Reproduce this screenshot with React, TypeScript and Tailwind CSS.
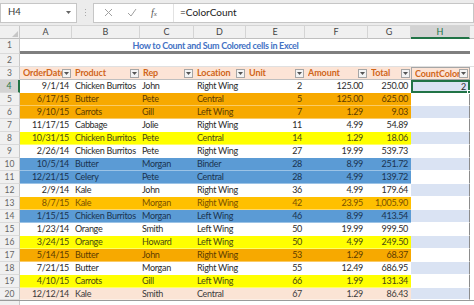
import React from "react";

type Fill = "w" | "o" | "o2" | "y" | "b" | "p";

const fillCls: Record<Fill, string> = {
  w: "bg-white text-[#2b2b2b]",
  o: "bg-[#f7a900] text-[#5e3c00]",
  o2: "bg-[#ffc000] text-[#7a5000]",
  y: "bg-[#ffff00] text-[#4a4a12]",
  b: "bg-[#5b9bd5] text-[#1a3350]",
  p: "bg-[#fbe4d5] text-[#3b3b3b]",
};

type Row = [number, string, string, string, string, string, string, string, Fill];

const rows: Row[] = [
  [4, "9/1/14", "Chicken Burritos", "John", "Right Wing", "2", "125.00", "250.00", "w"],
  [5, "6/17/15", "Butter", "Pete", "Central", "5", "125.00", "625.00", "o"],
  [6, "9/10/15", "Carrots", "Gill", "Left Wing", "7", "1.29", "9.03", "o"],
  [7, "11/17/15", "Cabbage", "Jolie", "Right Wing", "11", "4.99", "54.89", "w"],
  [8, "10/31/15", "Chicken Burritos", "Pete", "Central", "14", "1.29", "18.06", "y"],
  [9, "2/26/14", "Chicken Burritos", "Pete", "Right Wing", "27", "19.99", "539.73", "w"],
  [10, "10/5/14", "Butter", "Morgan", "Binder", "28", "8.99", "251.72", "b"],
  [11, "12/21/15", "Celery", "Pete", "Central", "28", "4.99", "139.72", "b"],
  [12, "2/9/14", "Kale", "John", "Right Wing", "36", "4.99", "179.64", "w"],
  [13, "8/7/15", "Kale", "Morgan", "Right Wing", "42", "23.95", "1,005.90", "o2"],
  [14, "1/15/15", "Chicken Burritos", "Morgan", "Left Wing", "46", "8.99", "413.54", "b"],
  [15, "1/23/14", "Orange", "Smith", "Left Wing", "50", "19.99", "999.50", "w"],
  [16, "3/24/15", "Orange", "Howard", "Left Wing", "50", "4.99", "249.50", "y"],
  [17, "5/14/15", "Butter", "John", "Right Wing", "53", "1.29", "68.37", "o"],
  [18, "7/21/15", "Butter", "Morgan", "Right Wing", "55", "12.49", "686.95", "w"],
  [19, "4/10/15", "Carrots", "Gill", "Left Wing", "66", "1.99", "131.34", "y"],
  [20, "12/12/14", "Kale", "Smith", "Central", "67", "1.29", "86.43", "p"],
];

function RowHead({ n, sel }: { n?: number | string; sel?: boolean }) {
  return (
    <div
      className={`w-[20px] shrink-0 text-center text-[8.5px] tracking-normal leading-[12px] border-b border-[#dadada] ${
        sel
          ? "bg-[#d3d3d3] text-[#217346] border-r-2 border-r-[#217346]"
          : "bg-[#f0f0f0] text-[#666] border-r border-r-[#c8c8c8]"
      }`}
    >
      {n}
    </div>
  );
}

function FilterBtn() {
  return (
    <div className="w-[9px] h-[9px] shrink-0 mr-[1px] bg-[#f4f4f4] border border-[#a6a6a6] flex items-center justify-center">
      <svg width="5" height="3" viewBox="0 0 5 3">
        <path d="M0 0h5L2.5 3z" fill="#555" />
      </svg>
    </div>
  );
}

function HeadCell({ w, label }: { w: string; label: string }) {
  return (
    <div className={`${w} shrink-0 flex items-center bg-[#fce4d6] border-b border-[#bfbfbf] pl-[3px]`}>
      <span className="flex-1 min-w-0 overflow-hidden whitespace-nowrap font-bold tracking-[-0.1px] text-[#d0661a] leading-[12px]">
        {label}
      </span>
      <FilterBtn />
    </div>
  );
}

function ColLetter({ w, l, sel }: { w: string; l: string; sel?: boolean }) {
  return (
    <div
      className={`${w} shrink-0 text-center leading-[12px] border-r border-r-[#d4d4d4] ${
        sel ? "bg-[#d3d3d3] text-[#217346] border-b-2 border-b-[#217346]" : "bg-[#f0f0f0] text-[#444] border-b border-b-[#bfbfbf]"
      }`}
    >
      {l}
    </div>
  );
}

export default function App() {
  return (
    <div className="w-[474px] h-[305px] overflow-hidden bg-white font-['Lato',sans-serif] text-[9px] tracking-[-0.3px] text-[#2b2b2b]">
      {/* formula bar */}
      <div className="h-[26px] bg-[#ececec] flex items-center border-b border-[#d4d4d4]">
        <div className="h-[20px] w-[77px] bg-white border border-[#c6c6c6] flex items-center justify-between pl-[7px] pr-[5px]">
          <span className="text-[9.5px] tracking-normal text-[#333]">H4</span>
          <svg width="5" height="3" viewBox="0 0 5 3">
            <path d="M0 0h5L2.5 3z" fill="#666" />
          </svg>
        </div>
        <div className="w-[16px] flex flex-col items-center gap-[2px]">
          <span className="w-[1px] h-[1px] bg-[#aaa]" />
          <span className="w-[1px] h-[1px] bg-[#aaa]" />
          <span className="w-[1px] h-[1px] bg-[#aaa]" />
        </div>
        <div className="h-[20px] flex-1 bg-white border border-[#c6c6c6] flex items-center">
          <div className="w-[80px] h-full flex items-center pl-[10px] gap-[14px] border-r border-[#e2e2e2]">
            <svg width="9" height="9" viewBox="0 0 9 9">
              <path d="M1 1l7 7M8 1l-7 7" stroke="#a0a0a0" strokeWidth="1" />
            </svg>
            <svg width="10" height="9" viewBox="0 0 10 9">
              <path d="M1 5l3 3 5-7" stroke="#a0a0a0" strokeWidth="1" fill="none" />
            </svg>
            <span className="font-['Liberation_Serif',serif] italic text-[10px] tracking-normal text-[#555]">
              f<span className="text-[7px]">x</span>
            </span>
          </div>
          <span className="pl-[6px] text-[10px] tracking-normal text-[#222]">=ColorCount</span>
        </div>
      </div>

      {/* column letters */}
      <div className="flex h-[13px] tracking-normal">
        <div className="w-[20px] shrink-0 bg-[#f0f0f0] border-r border-[#c8c8c8] border-b border-b-[#bfbfbf] relative">
          <svg className="absolute right-[1px] bottom-[1px]" width="6" height="6" viewBox="0 0 6 6">
            <path d="M6 0v6H0z" fill="#c6c6c6" />
          </svg>
        </div>
        <ColLetter w="w-[52px]" l="A" />
        <ColLetter w="w-[68px]" l="B" />
        <ColLetter w="w-[54px]" l="C" />
        <ColLetter w="w-[52px]" l="D" />
        <ColLetter w="w-[59px]" l="E" />
        <ColLetter w="w-[63px]" l="F" />
        <ColLetter w="w-[43px]" l="G" />
        <ColLetter w="w-[59px]" l="H" sel />
        <div className="flex-1 bg-[#f0f0f0] border-b border-b-[#bfbfbf]" />
      </div>

      {/* row 1 */}
      <div className="flex h-[15px]">
        <div className="w-[20px] shrink-0 text-center text-[8.5px] tracking-normal leading-[13px] bg-[#f0f0f0] text-[#666] border-r border-[#c8c8c8] border-b border-b-[#dadada]">
          1
        </div>
        <div className="w-[450px] shrink-0 flex flex-col">
          <div className="flex h-[12px]">
            <div className="w-[391px] shrink-0 text-center font-bold text-[#4472c4] leading-[13px] text-[9px]">
              How to Count and Sum Colored cells in Excel
            </div>
          </div>
          <div className="h-[3px] bg-[#7f7f7f]" />
        </div>
      </div>

      {/* row 2 */}
      <div className="flex h-[13px]">
        <RowHead n={2} />
        <div className="flex-1 border-b border-[#e0e0e0]" />
      </div>

      {/* row 3 headers */}
      <div className="flex h-[13px]">
        <RowHead n={3} />
        <HeadCell w="w-[52px]" label="OrderDate" />
        <HeadCell w="w-[68px]" label="Product" />
        <HeadCell w="w-[54px]" label="Rep" />
        <HeadCell w="w-[52px]" label="Location" />
        <HeadCell w="w-[59px]" label="Unit" />
        <HeadCell w="w-[63px]" label="Amount" />
        <HeadCell w="w-[43px]" label="Total" />
        <div className="w-[59px] shrink-0 flex items-center bg-[#fce4d6] border border-[#a6a6a6] pl-[3px]">
          <span className="flex-1 min-w-0 overflow-hidden whitespace-nowrap font-bold tracking-[-0.1px] text-[#d0661a] leading-[12px]">
            CountColor
          </span>
          <FilterBtn />
        </div>
      </div>

      {/* data rows */}
      {rows.map((r) => {
        const f = fillCls[r[8]];
        const hBg = r[0] % 2 === 0 ? "bg-[#dae3f3]" : "bg-white";
        const cell = `shrink-0 whitespace-nowrap overflow-hidden leading-[12px] border-b border-b-[#ffffff66] ${f}`;
        const last = r[0] === 20;
        return (
          <div key={r[0]} className={`flex h-[13px] ${last ? "border-b border-[#9a9a9a]" : ""}`}>
            <RowHead n={r[0]} sel={r[0] === 4} />
            <div className={`w-[52px] text-right pr-[3px] ${cell}`}>{r[1]}</div>
            <div className={`w-[68px] pl-[3px] ${cell}`}>{r[2]}</div>
            <div className={`w-[54px] pl-[2px] ${cell}`}>{r[3]}</div>
            <div className={`w-[52px] pl-[3px] ${cell}`}>{r[4]}</div>
            <div className={`w-[59px] text-right pr-[3px] ${cell}`}>{r[5]}</div>
            <div className={`w-[63px] text-right pr-[5px] ${cell}`}>{r[6]}</div>
            <div className={`w-[43px] text-right pr-[3px] ${cell}`}>{r[7]}</div>
            {r[0] === 4 ? (
              <div className={`w-[59px] shrink-0 relative ${hBg} border-2 border-[#217346] text-right pr-[2px] leading-[9px] text-[#2b2b2b]`}>
                2
                <div className="absolute -right-[3px] -bottom-[3px] w-[4px] h-[4px] bg-[#217346] border border-white" />
              </div>
            ) : (
              <div className={`w-[59px] shrink-0 ${hBg} border-b border-b-white border-r border-r-[#8c8c8c]`} />
            )}
          </div>
        );
      })}

      {/* row 21 (only its top sliver is visible) */}
      <div className="flex h-[13px]">
        <RowHead />
        <div className="flex-1" />
      </div>
    </div>
  );
}
